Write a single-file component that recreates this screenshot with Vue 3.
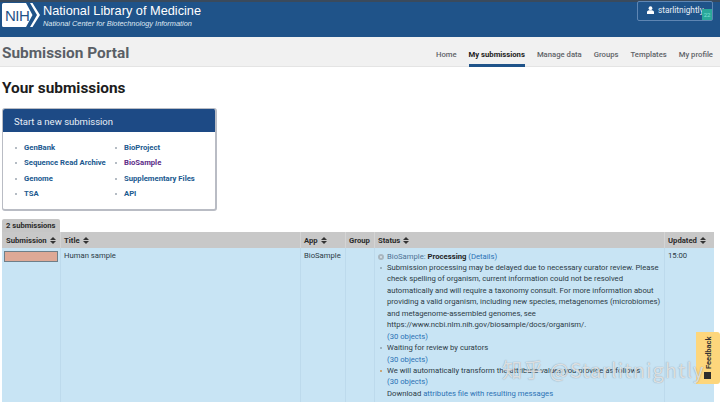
<script setup>
const nav = [
  { label: 'Home' },
  { label: 'My submissions', active: true },
  { label: 'Manage data' },
  { label: 'Groups' },
  { label: 'Templates' },
  { label: 'My profile' }
]
const linksLeft = ['GenBank', 'Sequence Read Archive', 'Genome', 'TSA']
const linksRight = [
  { label: 'BioProject' },
  { label: 'BioSample', visited: true },
  { label: 'Supplementary Files' },
  { label: 'API' }
]
</script>

<template>
  <div class="page">
    <header class="top">
      <div class="brand">
        <div class="logo">
          <svg width="38" height="24" viewBox="0 0 38 24">
            <path d="M0 1.500A1.500 1.500 0 0 1 1.500 0H24l6.500 12L24 24H1.500A1.500 1.500 0 0 1 0 22.500z" fill="#fff" />
            <path d="M28 0h2.500L38 12l-7.500 12H28l7-12z" fill="#fff" />
          </svg>
          <span class="nih">NIH</span>
        </div>
        <div class="brand-text">
          <div class="nlm">National Library of Medicine</div>
          <div class="ncbi">National Center for Biotechnology Information</div>
        </div>
      </div>
      <div class="user">
        <svg width="7" height="8" viewBox="0 0 9 10"><circle cx="4.500" cy="2.600" r="2.400" fill="#fff" /><path d="M0 10V7.500C0 6 1.500 5.200 4.500 5.200S9 6 9 7.500V10z" fill="#fff" /></svg>
        <span>starlitnightly</span>
        <span class="badge">22</span>
      </div>
    </header>

    <div class="subnav">
      <div class="portal">Submission Portal</div>
      <nav class="nav">
        <span v-for="n in nav" :key="n.label" class="nav-item" :class="{ active: n.active }">{{ n.label }}</span>
      </nav>
    </div>

    <main class="content">
      <h1>Your submissions</h1>
      <section class="box">
        <div class="box-head">Start a new submission</div>
        <div class="box-body">
          <ul>
            <li v-for="l in linksLeft" :key="l"><a>{{ l }}</a></li>
          </ul>
          <ul>
            <li v-for="l in linksRight" :key="l.label"><a :class="{ visited: l.visited }">{{ l.label }}</a></li>
          </ul>
        </div>
      </section>

      <div class="tab">2 submissions</div>
      <div class="table">
        <div class="cell th c1">Submission <i class="sort"></i></div>
        <div class="cell th c2">Title <i class="sort"></i></div>
        <div class="cell th c3">App <i class="sort"></i></div>
        <div class="cell th c4">Group</div>
        <div class="cell th c5">Status <i class="sort"></i></div>
        <div class="cell th c6">Updated <i class="sort"></i></div>

        <div class="cell td c1"><div class="redacted"></div></div>
        <div class="cell td c2">Human sample</div>
        <div class="cell td c3">BioSample</div>
        <div class="cell td c4"></div>
        <div class="cell td c5 status">
          <div class="line first"><span class="dot"></span><span class="muted">BioSample:</span> <b>Processing</b> <a>(Details)</a></div>
          <div class="line bullet">Submission processing may be delayed due to necessary curator review. Please check spelling of organism, current information could not be resolved automatically and will require a taxonomy consult. For more information about providing a valid organism, including new species, metagenomes (microbiomes) and metagenome-assembled genomes, see https://www.ncbi.nlm.nih.gov/biosample/docs/organism/.</div>
          <div class="line"><a>(30 objects)</a></div>
          <div class="line bullet">Waiting for review by curators</div>
          <div class="line"><a>(30 objects)</a></div>
          <div class="line bullet warn">We will automatically transform the attribute values you provide as follows</div>
          <div class="line"><a>(30 objects)</a></div>
          <div class="line">Download <a>attributes file with resulting messages</a></div>
        </div>
        <div class="cell td c6">15:00</div>
      </div>
    </main>

    <div class="feedback">
      <span class="fb-icon"></span>
      <span class="fb-text">Feedback</span>
    </div>
    <div class="watermark">知乎 @Starlitnightly</div>
  </div>
</template>

<style>
html, body { margin: 0; padding: 0; background: #fff; overflow: hidden; }
</style>

<style scoped>
.page {
  position: relative;
  width: 720px;
  height: 402px;
  overflow: hidden;
  background: #fff;
  font-family: Roboto, "Liberation Sans", sans-serif;
  color: #222;
}
.top {
  box-sizing: border-box;
  height: 37px;
  background: #1f5389;
  border-top: 2px solid #3a4a5c;
  display: flex;
  justify-content: space-between;
  align-items: flex-start;
}
.brand {
  display: flex;
  align-items: flex-start;
  padding: 1px 0 0 2px;
  color: #fff;
  font-family: "Liberation Sans", Arial, sans-serif;
}
.logo { position: relative; width: 38px; height: 24px; }
.logo svg { display: block; }
.nih {
  position: absolute;
  left: 3px;
  top: 4px;
  font-size: 15px;
  line-height: 17px;
  color: #1f5389;
  letter-spacing: -0.5px;
}
.brand-text { margin-left: 3px; }
.nlm { font-size: 12.750px; line-height: 15px; }
.ncbi { font-size: 7.370px; line-height: 10px; font-style: italic; margin-top: 1px; color: #dfe8f2; }
.user {
  position: relative;
  box-sizing: border-box;
  width: 76px;
  height: 20px;
  margin: -1px 7px 0 0;
  border: 1px solid #5f86b3;
  border-radius: 2px;
  display: flex;
  align-items: center;
  gap: 4px;
  padding: 0 0 2px 9px;
  color: #e8eef5;
  font-size: 8.300px;
  white-space: nowrap;
}
.badge {
  position: absolute;
  right: 0;
  bottom: 0;
  width: 10px;
  height: 11px;
  background: #2aa89a;
  color: #7fe0d8;
  font-size: 6px;
  line-height: 11px;
  text-align: center;
}
.subnav {
  box-sizing: border-box;
  height: 30px;
  background: #f1f1f1;
  border-bottom: 1px solid #e4e4e4;
  display: flex;
  justify-content: space-between;
  align-items: stretch;
  padding: 0 7px 0 2px;
}
.portal {
  font-size: 15.400px;
  font-weight: 700;
  color: #5a5f66;
  line-height: 32px;
}
.nav { display: flex; gap: 12px; font-size: 7.700px; font-weight: 500; color: #5f6368; }
.nav-item {
  box-sizing: border-box;
  height: 30px;
  line-height: 35px;
  white-space: nowrap;
}
.nav-item.active {
  color: #222;
  font-weight: 700;
  border-bottom: 3px solid #1f5389;
}
.content { padding: 0 2px; }
h1 {
  margin: 0;
  padding-top: 12px;
  font-size: 15.400px;
  line-height: 18px;
  font-weight: 700;
  color: #1c1c1c;
}
.box {
  box-sizing: border-box;
  width: 215px;
  height: 103px;
  margin-top: 11px;
  border: 1px solid #b9bcc4;
  border-bottom-width: 2px;
  border-right-width: 2px;
  border-radius: 3px;
  overflow: hidden;
}
.box-head {
  height: 24px;
  margin: -1px -2px 0 -1px;
  padding-left: 12px;
  background: #1d4a85;
  color: #e8eef5;
  font-size: 9.500px;
  line-height: 27px;
}
.box-body {
  display: flex;
  padding: 8px 0 0 11px;
}
ul { list-style: none; margin: 0; padding: 0; }
ul:first-child { width: 100px; }
li {
  position: relative;
  height: 15.300px;
  line-height: 15.300px;
  padding-left: 10px;
  font-size: 7.700px;
  font-weight: 700;
  white-space: nowrap;
}
li::before {
  content: "";
  position: absolute;
  left: 1px;
  top: 7px;
  width: 2px;
  height: 2px;
  background: #b5bcc4;
}
a { color: #20598f; }
a.visited { color: #5b2a86; }
.tab {
  box-sizing: border-box;
  width: 58px;
  height: 13px;
  margin-top: 8px;
  background: #c6c6c6;
  border-radius: 2px 2px 0 0;
  padding-left: 4px;
  font-size: 7.600px;
  font-weight: 700;
  line-height: 14px;
  color: #2a2a2a;
  white-space: nowrap;
}
.table {
  display: grid;
  grid-template-columns: 58px 240px 45px 29px 290px 50px;
  grid-template-rows: 16px 154px;
  width: 712px;
}
.cell { box-sizing: border-box; padding: 0 0 0 3px; font-size: 7.700px; }
.th {
  background: #c8c8c8;
  font-weight: 700;
  line-height: 17px;
  white-space: nowrap;
  color: #2b2b2b;
  border-left: 1px solid #d4d4d4;
}
.th.c1 { border-left: 0; padding-left: 4px; }
.td {
  background: #c8e4f4;
  border-left: 1px solid #bddaec;
  line-height: 11.450px;
  padding-top: 2px;
  color: #2c3b46;
}
.td.c1 { border-left: 0; padding: 3px 0 0 2px; }
.sort {
  display: inline-block;
  position: relative;
  width: 6px;
  height: 7px;
  vertical-align: -1px;
  margin-left: 1px;
}
.sort::before, .sort::after {
  content: "";
  position: absolute;
  left: 0;
  border-left: 3px solid transparent;
  border-right: 3px solid transparent;
}
.sort::before { top: 0; border-bottom: 3px solid #333; }
.sort::after { bottom: 0; border-top: 3px solid #333; }
.redacted {
  width: 54px;
  height: 11px;
  background: #dea996;
  border: 1px solid #6f7f88;
  box-sizing: border-box;
}
.status { padding: 2.500px 2px 0 3px; }
.status a { color: #2a72b4; }
.line { position: relative; padding-left: 9px; }
.dot {
  position: absolute;
  left: 0;
  top: 3px;
  width: 6px;
  height: 6px;
  box-sizing: border-box;
  border: 2px solid #a9b6bf;
  border-radius: 50%;
  background: #dbe5ea;
}
.muted { color: #4f7394; }
.first b { color: #1e1e1e; }
.bullet::before {
  content: "";
  position: absolute;
  left: 2px;
  top: 5px;
  width: 2px;
  height: 2px;
  background: #9db4c2;
}
.warn::before { background: #c9a77a; }
.feedback {
  position: absolute;
  right: 0;
  top: 332px;
  box-sizing: border-box;
  width: 24px;
  height: 52px;
  background: #fdd67c;
  border-radius: 3px 0 0 3px;
  writing-mode: vertical-rl;
  transform: rotate(180deg);
  display: flex;
  align-items: center;
  justify-content: flex-start;
  gap: 3px;
  padding: 5px 0 0 0;
  font-size: 7.500px;
  font-weight: 700;
  color: #333;
}
.fb-icon { width: 7px; height: 7px; background: #2d2d2d; }
.watermark {
  position: absolute;
  left: 502px;
  top: 356px;
  font-family: "Noto Sans CJK SC", "Noto Sans", sans-serif;
  font-size: 20px;
  line-height: 27px;
  color: rgba(255, 255, 255, 0.72);
  text-shadow: 0 0 1px rgba(80, 90, 100, 0.7);
  white-space: nowrap;
  letter-spacing: 1px;
}
</style>
